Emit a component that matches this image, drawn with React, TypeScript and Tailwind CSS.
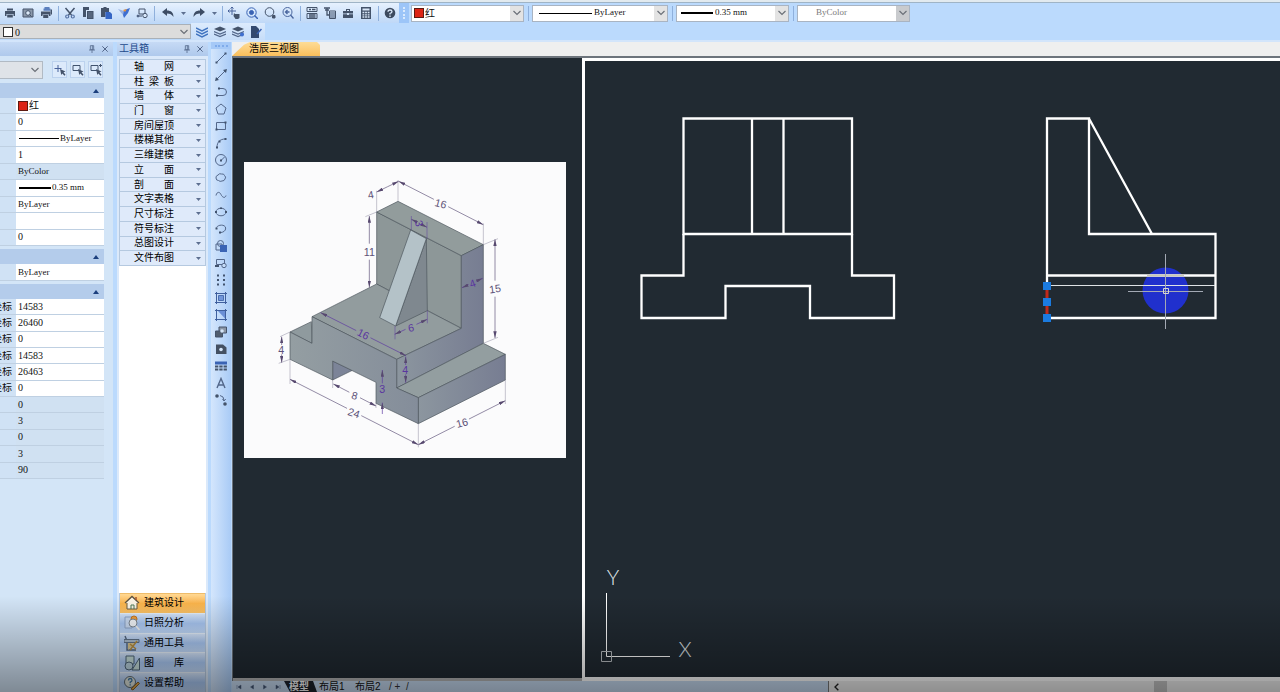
import type { ReactNode } from "react";
import clsx from "clsx";

type GlyphProps = { children: ReactNode; className?: string };

const Glyph = ({ children, className = "size-3" }: GlyphProps) => (
  <svg
    viewBox="0 0 12 12"
    className={clsx("shrink-0", className)}
    fill="none"
    stroke="#53678a"
    strokeWidth="1"
    aria-hidden="true"
  >
    {children}
  </svg>
);

const DARK = "#44536a";
const BLUE = "#3a63b4";

const fileIcons = [
  {
    name: "Print",
    icon: (
      <g fill={DARK} stroke="none">
        <path d="M3 1.5h6v2H3zM1 4h10v5H9.5V7h-7v2H1z" />
        <path d="M3.2 7.6h5.6V10.500H3.200z" />
      </g>
    ),
  },
  {
    name: "Print preview",
    icon: (
      <>
        <path d="M1 2h10v8H1z" fill="#8b98aa" stroke={DARK} />
        <circle cx="6" cy="6" r="2.300" fill="#dce9f8" stroke={DARK} />
        <path d="M7.600 7.600l2 2" stroke={DARK} />
      </>
    ),
  },
  {
    name: "Batch print",
    icon: (
      <g fill={DARK} stroke="none">
        <path d="M4.500 0h5v1.500h1v2.300H3.500V1.500h1z" fill="#5b7fbe" />
        <path d="M1 4.500h9.500V9H9V7.500H2.500V9H1zM3.200 8H8.300v3H3.200z" />
        <path d="M10.500 2.500h1.500v5h-1.200z" />
      </g>
    ),
  },
];

const editIcons = [
  {
    name: "Cut",
    icon: (
      <g stroke={DARK} strokeWidth="1.500">
        <path d="M1.500 1l6 7M10.500 1l-6 7" />
        <circle cx="3.200" cy="9.500" r="1.500" stroke="#5672a4" strokeWidth="1.200" />
        <circle cx="8.800" cy="9.500" r="1.500" stroke="#5672a4" strokeWidth="1.200" />
      </g>
    ),
  },
  {
    name: "Copy",
    icon: (
      <g fill={DARK} stroke="none">
        <path d="M1 0h6v3H4v7H1z" />
        <path d="M5 4h6.500v8H5z" />
        <path d="M6 6h4.500M6 8h4.500M6 10h4.500" stroke="#8796ad" strokeWidth=".6" />
      </g>
    ),
  },
  {
    name: "Paste",
    icon: (
      <g stroke="none">
        <path d="M1 1h2.500V0h3v1H9v4H5.500v5H1z" fill={DARK} />
        <path d="M5.500 5h4.500l2 2v5H5.500z" fill="#3565c4" />
      </g>
    ),
  },
  {
    name: "Match properties",
    icon: (
      <g stroke="none">
        <path d="M0 2l6 2-1 4z" fill="#9db3e2" />
        <path d="M6 3l6-2-2 5-4 5-1-3z" fill="#3f6fd0" />
        <path d="M5 3l4-1-2 3z" fill="#ef9a3c" />
      </g>
    ),
  },
  {
    name: "Block editor",
    icon: (
      <>
        <path d="M3 2h6v5H3zM1 9h5" stroke={DARK} />
        <circle cx="2" cy="9" r="1" fill={DARK} />
        <circle cx="9" cy="8.500" r="2.200" fill="#d8e8fb" stroke={DARK} />
      </>
    ),
  },
];

const viewIcons = [
  {
    name: "Pan",
    icon: (
      <>
        <path d="M4 0v8M0 4h8M2.500 1.500L4 0l1.500 1.500M1.500 2.500L0 4l1.500 1.500" stroke="#48629a" />
        <path d="M6 6l1 1h4.500v4L10 12H7.500L5.500 9z" fill={DARK} stroke="none" />
      </>
    ),
  },
  {
    name: "Zoom realtime",
    icon: (
      <g stroke={BLUE}>
        <circle cx="5.500" cy="5.500" r="4.700" />
        <circle cx="5.500" cy="5.500" r="2" fill={BLUE} />
        <path d="M8.500 8.500L12 12" strokeWidth="1.500" />
      </g>
    ),
  },
  {
    name: "Zoom window",
    icon: (
      <g stroke={DARK}>
        <circle cx="5.500" cy="5" r="4.300" />
        <path d="M8.500 8.500h2.500v2.500H8.500z" fill={DARK} />
      </g>
    ),
  },
  {
    name: "Zoom previous",
    icon: (
      <g stroke="#4a669e">
        <circle cx="5.500" cy="5" r="4.500" />
        <path d="M3.500 5h4M5.500 3L3.500 5l2 2M8.500 8l3 3.500" strokeWidth="1.300" />
      </g>
    ),
  },
];

const paletteIcons = [
  {
    name: "Properties",
    icon: (
      <g stroke={DARK}>
        <path d="M1 .5h10v4H1zM1 6.500h10v5H1z" />
        <path d="M3 2.500h2M6 2.500h3.500M3 8h6.500M3 10h6.500" strokeWidth="1.400" />
      </g>
    ),
  },
  {
    name: "Design center",
    icon: (
      <g stroke={DARK}>
        <path d="M0 1h6M1 3h4M3 1v7h2" strokeWidth="1.300" />
        <path d="M5.500 4h6v7.500h-6zM6 6h5M6 8h5M6 10h5" />
      </g>
    ),
  },
  {
    name: "Tool palettes",
    icon: (
      <g fill={DARK} stroke="none">
        <path d="M1 4h10v2.500H1zM1 7.200h10V11H1zM4 2h4v2H7V3H5v1H4z" />
        <path d="M5 6h2v2H5z" fill="#cfe2f8" />
      </g>
    ),
  },
  {
    name: "Calculator",
    icon: (
      <>
        <path d="M1 0h10v12H1z" fill={DARK} stroke="none" />
        <path d="M2.500 5.500h7M2.500 7.800h7M2.500 10h7" stroke="#d8e6f7" strokeWidth="1.300" strokeDasharray="1.800 .8" />
        <path d="M2.500 2.500h7" stroke="#d8e6f7" strokeWidth="2" />
      </>
    ),
  },
];

const layerIcon = (extra: ReactNode) => (
  <>
    <path d="M0 3l6-2.500L12 3 6 5.500z" fill={DARK} stroke="none" />
    <path d="M0 5.500L6 8l6-2.500M0 8l6 2.500L12 8" strokeWidth="1.300" />
    {extra}
  </>
);

const layerIcons = [
  {
    name: "Layer manager",
    icon: (
      <g stroke="#4174c0" strokeWidth="1.400">
        <path d="M0 2l6 3 6-3M0 5l6 3 6-3M0 8l6 3 6-3" />
      </g>
    ),
  },
  { name: "Layer previous", icon: layerIcon(null) },
  {
    name: "Layer states",
    icon: layerIcon(<circle cx="10" cy="8.500" r="2" fill="#3f6fd0" stroke="none" />),
  },
  {
    name: "Layer walk",
    icon: (
      <>
        <path d="M1 0h5l3 3v9H1z" fill="#33496f" stroke="none" />
        <path d="M7 8l4.500-5" stroke={BLUE} strokeWidth="1.500" />
      </>
    ),
  },
];

const drawIcons = [
  {
    name: "Line",
    icon: (
      <>
        <path d="M1.500 10.500l9-9" />
        <path d="M.5 9.500h2v2h-2zM9.500.5h2v2h-2z" fill="#41536e" stroke="none" />
      </>
    ),
  },
  {
    name: "Construction line",
    icon: (
      <>
        <path d="M2 10l8-8" />
        <path d="M0 12l1-4 3 3zM12 0L8 1l3 3z" fill="#41536e" stroke="none" />
      </>
    ),
  },
  {
    name: "Polyline",
    icon: (
      <>
        <path d="M4 2.500h4a3.500 3.500 0 0 1 0 7H2" />
        <path d="M3 1.500h2v2H3zM1 8.500h2v2H1z" fill="#41536e" stroke="none" />
      </>
    ),
  },
  { name: "Polygon", icon: <path d="M6 1l5 4-2 6H3L1 5z" /> },
  {
    name: "Rectangle",
    icon: (
      <>
        <path d="M1.500 2.500h9v7h-9z" />
        <path d="M.5 8.500h2v2h-2zM9.500 1.500h2v2h-2z" fill="#41536e" stroke="none" />
      </>
    ),
  },
  {
    name: "Arc",
    icon: (
      <>
        <path d="M2 10.500C2 5 5 2 10.500 2" />
        <path d="M1 9.500h2v2H1zM9.500 1h2v2h-2zM3.500 3.500h2v2h-2z" fill="#41536e" stroke="none" />
      </>
    ),
  },
  {
    name: "Circle",
    icon: (
      <>
        <circle cx="6" cy="6" r="5.500" />
        <path d="M6 6.500l3.500-3.500" />
        <path d="M5 5.500h2v2H5z" fill="#41536e" stroke="none" />
      </>
    ),
  },
  {
    name: "Revision cloud",
    icon: <path d="M3 3q1.500-2 3.500-1 2.500-.5 3 1.500 2 1.500.5 3.500-.5 2-3 2-2 1-3.500-.5-2.500 0-2.500-2.500Q.5 4 3 3z" />,
  },
  { name: "Spline", icon: <path d="M1 6.500C2 2 5 3 6 5.500s4 4.500 5 1" /> },
  {
    name: "Ellipse",
    icon: (
      <>
        <ellipse cx="6" cy="6" rx="5" ry="3.800" />
        <path d="M0 5h2v2H0zM10 5h2v2h-2zM5 1.500h2v1.500H5z" fill="#41536e" stroke="none" />
      </>
    ),
  },
  {
    name: "Elliptical arc",
    icon: (
      <>
        <path d="M1.500 4.500C3 1.500 10 1 10.700 5c.3 3-3 4.500-5 4.500" />
        <path d="M.5 4.500h2v2h-2zM4 8.500h2v2H4z" fill="#41536e" stroke="none" />
      </>
    ),
  },
  {
    name: "Insert block",
    icon: (
      <>
        <path d="M1 4h6v6H1z" />
        <circle cx="5.500" cy="3.500" r="3" />
        <path d="M5 5H12v7H5z" fill={BLUE} stroke="none" />
      </>
    ),
  },
  {
    name: "Make block",
    icon: (
      <>
        <path d="M1.500 2.500h8v5h-8z" />
        <path d="M0 8h4v2H0z" fill="#41536e" stroke="none" />
        <circle cx="9" cy="8.500" r="2.200" fill="#c5dcf8" />
      </>
    ),
  },
  {
    name: "Point",
    icon: (
      <path
        d="M2 .5h2v2H2zM8 .5h2v2H8zM2 5h2v2H2zM8 5h2v2H8zM2 9.500h2v2H2zM8 9.500h2v2H8z"
        fill="#41536e"
        stroke="none"
      />
    ),
  },
  {
    name: "Hatch",
    icon: (
      <>
        <path d="M3.500 3.500h5v5h-5z" fill="#7196da" stroke="#4c6fb0" />
        <path d="M0 1.500h12M0 10.500h12M1.500 0v12M10.500 0v12" stroke="#3f5f9d" />
      </>
    ),
  },
  {
    name: "Gradient",
    icon: (
      <>
        <path d="M3 2h7.500v8z" fill="#6a8fd6" stroke="none" />
        <path d="M0 1.500h12M0 10.500h12M1.500 0v12M10.500 0v12" stroke="#3f5f9d" />
      </>
    ),
  },
  {
    name: "Region",
    icon: (
      <>
        <path d="M4 1h7.500v6H4z" fill="#8b96a5" stroke={DARK} />
        <path d="M.5 5h7v6h-7z" fill="#515d6e" stroke={DARK} />
        <circle cx="7" cy="5" r="1.800" fill="#d5e5f8" stroke="none" />
      </>
    ),
  },
  {
    name: "Wipeout",
    icon: (
      <>
        <path d="M1 1.500h7l3.500 3v6.500H1z" fill="#445062" stroke="none" />
        <circle cx="6" cy="6.500" r="1.800" fill="#d5e5f8" stroke="none" />
      </>
    ),
  },
  {
    name: "Table",
    icon: (
      <>
        <path d="M0 1.500h12v3H0z" fill={BLUE} stroke="none" />
        <path d="M0 6.500h12M0 9.500h12" strokeWidth="2" strokeDasharray="3.300 1" stroke={DARK} />
      </>
    ),
  },
  {
    name: "Multiline text",
    icon: <path d="M2 11L6 1.500 10 11M3.500 8h5" strokeWidth="1.400" />,
  },
  {
    name: "Add selected",
    icon: (
      <>
        <path d="M5 1.500q4 .5 4 5M7.500 5L9 7l1.700-2" />
        <circle cx="2" cy="2" r="1.800" fill={DARK} stroke="none" />
        <circle cx="10" cy="10" r="1.800" fill={DARK} stroke="none" />
      </>
    ),
  },
];

const selectIcons = [
  {
    name: "Toggle pickadd",
    icon: <path d="M4 1v7M.5 4.500h7" stroke="#48629a" />,
  },
  { name: "Select objects", icon: <path d="M1 1.500h7v5H1z" stroke="#41536e" /> },
  {
    name: "Quick select",
    icon: <path d="M1 1.500h7v5H1zM10.500 0v3M9 1.500h3" stroke="#41536e" />,
  },
];

const toolboxItems = [
  "轴\u3000\u3000网",
  "柱\u2002梁\u2002板",
  "墙\u3000\u3000体",
  "门\u3000\u3000窗",
  "房间屋顶",
  "楼梯其他",
  "三维建模",
  "立\u3000\u3000面",
  "剖\u3000\u3000面",
  "文字表格",
  "尺寸标注",
  "符号标注",
  "总图设计",
  "文件布图",
];

const toolboxGroups = [
  {
    label: "建筑设计",
    icon: (
      <>
        <path d="M3 7v7h10V7" fill="#fdf6e6" stroke="#6b5d40" />
        <path d="M1 8l7-6.500L15 8" fill="#fdf6e6" stroke="#5c5240" strokeWidth="1.300" />
        <path d="M7 14v-4h3v4" stroke="#4d7a56" />
        <path d="M12 2v3" stroke="#a6552c" strokeWidth="1.500" />
      </>
    ),
  },
  {
    label: "日照分析",
    icon: (
      <>
        <path d="M1 2h7v11H1z" fill="#c9daf2" stroke="#8ea5c8" />
        <circle cx="10" cy="4" r="3" fill="#f0a040" stroke="#c47722" />
        <circle cx="9" cy="8" r="4" fill="#f3f6fa" stroke="#7d8894" />
        <path d="M12 11l3.500 4" stroke="#f0f2f4" strokeWidth="1.800" />
      </>
    ),
  },
  {
    label: "通用工具",
    icon: (
      <>
        <path d="M1 1l2 5v9h9" stroke="#53657f" strokeWidth="1.400" />
        <path d="M0 4.500h15v3H0z" fill="#a9bbce" stroke="#5f7188" />
        <path d="M4 15V8h7z" fill="#d8c48e" />
        <path d="M6 15l7-9M6 9l6 5" stroke="#b58c3d" strokeWidth="1.500" />
      </>
    ),
  },
  {
    label: "图\u3000\u3000库",
    icon: (
      <g stroke="#4d6478">
        <path d="M2 1h8v8H2z" fill="#c4dcd9" />
        <circle cx="5" cy="11" r="4" fill="#b8d1dd" />
        <path d="M15.500 3v12H8z" fill="#c4dcd9" />
      </g>
    ),
  },
  {
    label: "设置帮助",
    icon: (
      <>
        <circle cx="6" cy="7" r="5.500" fill="#e0e5dd" stroke="#5e6b74" />
        <path d="M4.500 5.500q0-2 1.700-2T8 5.300Q8 6.500 6.200 7.200v1M6.200 9.300v1.200" stroke="#3f77a5" strokeWidth="1.300" />
        <path d="M7 14l7-7 1.500 1.500L9 15z" fill="#d9a24a" stroke="#8a6426" />
      </>
    ),
  },
];

type Property = { label: string; value: string; line?: string; color?: boolean; readOnly?: boolean; small?: boolean };

const generalProperties: Property[] = [
  { label: "", value: "红", color: true },
  { label: "", value: "0" },
  { label: "", value: "ByLayer", line: "h-px w-10 bg-black", small: true },
  { label: "", value: "1" },
  { label: "", value: "ByColor", readOnly: true, small: true },
  { label: "", value: "0.35 mm", line: "h-[2px] w-8 bg-black", small: true },
  { label: "", value: "ByLayer", small: true },
  { label: "", value: "\u00a0" },
  { label: "", value: "0" },
];

const materialProperties: Property[] = [{ label: "", value: "ByLayer", small: true }];

const geometryProperties: Property[] = [
  { label: "坐标", value: "14583" },
  { label: "坐标", value: "26460" },
  { label: "坐标", value: "0" },
  { label: "坐标", value: "14583" },
  { label: "坐标", value: "26463" },
  { label: "坐标", value: "0" },
  { label: "", value: "0", readOnly: true },
  { label: "", value: "3", readOnly: true },
  { label: "", value: "0", readOnly: true },
  { label: "", value: "3", readOnly: true },
  { label: "", value: "90", readOnly: true },
];

const Chevron = () => (
  <svg viewBox="0 0 8 6" className="h-[6px] w-2" fill="none" stroke="#6b7078" strokeWidth="1.200" aria-hidden="true">
    <path d="M.5 1L4 4.500 7.500 1" />
  </svg>
);

const Caret = () => (
  <svg viewBox="0 0 5 3" className="h-[3px] w-[5px]" fill="#5d6f90" aria-hidden="true">
    <path d="M0 0h5L2.500 3z" />
  </svg>
);

const Separator = () => (
  <span className="flex w-[6px] shrink-0 justify-center">
    <span className="h-[15px] w-px bg-[#8fb0dc]" />
  </span>
);

const ToolButtons = ({ items }: { items: { name: string; icon: ReactNode }[] }) => (
  <>
    {items.map(({ name, icon }) => (
      <button key={name} type="button" aria-label={name} className="flex h-full w-[18px] shrink-0 items-center justify-center">
        <Glyph>{icon}</Glyph>
      </button>
    ))}
  </>
);

type ComboProps = {
  label: string;
  value: string;
  className: string;
  textClass?: string;
  children?: ReactNode;
  disabled?: boolean;
};

const Combo = ({ label, value, className, textClass, children, disabled }: ComboProps) => (
  <div
    className={clsx(
      "relative flex h-[17px] shrink-0 items-center border border-[#a9b4c2] bg-white pl-[2px]",
      className
    )}
  >
    {children}
    <select
      aria-label={label}
      disabled={disabled}
      className={clsx("h-full min-w-0 flex-1 appearance-none bg-transparent outline-none", textClass)}
    >
      <option>{value}</option>
    </select>
    <span
      className={clsx(
        "pointer-events-none flex h-full w-[13px] items-center justify-center",
        disabled ? "bg-[#c9cbce]" : "bg-[#e3e3e3]"
      )}
    >
      <Chevron />
    </span>
  </div>
);

const Swatch = () => <span className="mr-px size-[10px] shrink-0 border border-[#5c1a12] bg-[#dd2415]" />;

const StandardToolbar = () => (
  <div className="flex h-5 items-center">
    <div className="flex h-full items-center bg-linear-to-b from-[#e6f1fe] to-[#bfd8f7] pl-px">
      <ToolButtons items={fileIcons} />
      <Separator />
      <ToolButtons items={editIcons} />
      <Separator />
      <button type="button" aria-label="Undo" className="flex w-[22px] justify-center">
        <Glyph>
          <path d="M0 5l5-4v2.500c4 0 6.500 2 6.500 6.500C10 7.500 8 6.500 5 6.500V9z" fill="#3d4c64" stroke="none" />
        </Glyph>
      </button>
      <button type="button" aria-label="Undo history" className="flex w-[9px] justify-center">
        <Caret />
      </button>
      <button type="button" aria-label="Redo" className="flex w-[22px] justify-center">
        <Glyph>
          <path d="M12 5L7 1v2.500C3 3.500.5 5.500.5 10 2 7.500 4 6.500 7 6.500V9z" fill="#3d4c64" stroke="none" />
        </Glyph>
      </button>
      <button type="button" aria-label="Redo history" className="flex w-[9px] justify-center">
        <Caret />
      </button>
      <Separator />
      <ToolButtons items={viewIcons} />
      <Separator />
      <ToolButtons items={paletteIcons} />
      <Separator />
      <button type="button" aria-label="Help" className="flex w-[18px] justify-center">
        <Glyph>
          <circle cx="6" cy="6" r="5.300" fill="#3d4a5e" stroke="none" />
          <path d="M4 4.700q0-1.700 2-1.700t2 1.500Q8 5.700 6 6.500v1M6 8.500V10" stroke="#dbe8f8" strokeWidth="1.300" />
        </Glyph>
      </button>
      <span className="flex h-full w-[10px] items-center justify-center bg-[#9cc5f8]">
        <span className="h-3 border-l-2 border-dotted border-[#d9eafd]" />
      </span>
    </div>
    <div className="flex h-full items-center gap-px pl-[2px]">
      <Combo label="Color" value="红" className="w-[113px]" textClass="text-[10px]">
        <Swatch />
      </Combo>
      <Separator />
      <Combo label="Linetype" value="ByLayer" className="w-[136px]" textClass="font-['Liberation_Serif',serif] text-[9px]">
        <span className="mr-[2px] ml-1 h-px w-[53px] bg-black" />
      </Combo>
      <Separator />
      <Combo label="Lineweight" value="0.35 mm" className="w-[113px]" textClass="font-['Liberation_Serif',serif] text-[9px]">
        <span className="mx-[2px] h-[2px] w-8 bg-black" />
      </Combo>
      <Separator />
      <Combo
        label="Plot style"
        value="ByColor"
        disabled
        className="w-[113px]"
        textClass="pl-4 font-['Liberation_Serif',serif] text-[9px] text-[#7c7c7c]"
      />
    </div>
  </div>
);

const LayerToolbar = () => (
  <div className="flex h-[17px] items-center">
    <div className="flex h-[15px] w-[191px] items-center border-y border-r border-[#a9b0b8] bg-[#dcdcdc] pl-[3px]">
      <span className="mr-[2px] size-[10px] shrink-0 border border-[#333] bg-white" />
      <select
        aria-label="Layer"
        className="h-full min-w-0 flex-1 appearance-none bg-transparent font-['Liberation_Serif',serif] text-[10px] outline-none"
      >
        <option>0</option>
      </select>
      <span className="pointer-events-none flex w-3 justify-center">
        <Chevron />
      </span>
    </div>
    <div className="flex h-full bg-linear-to-b from-[#dcebfd] to-[#c6ddf9] pl-[2px]">
      <ToolButtons items={layerIcons} />
    </div>
  </div>
);

const PanelHeader = ({ title }: { title?: string }) => (
  <div className="flex h-[14px] items-center bg-linear-to-b from-[#c6daf5] to-[#afc9ec] px-[2px]">
    <h2 className="flex-1 text-[10px] leading-none text-[#234a8c]">{title}</h2>
    <button type="button" aria-label="Pin panel" className="flex w-[13px] justify-center">
      <Glyph className="size-2">
        <path d="M3.500 1h5v6h-5zM6.500 1v6M1.500 7.500h9M6 8v4" strokeWidth="1.200" />
      </Glyph>
    </button>
    <button type="button" aria-label="Close panel" className="flex w-[13px] justify-center">
      <Glyph className="size-2">
        <path d="M2 2l8 8M10 2l-8 8" strokeWidth="1.500" />
      </Glyph>
    </button>
  </div>
);

const SectionHeader = ({ name }: { name: string }) => (
  <button
    type="button"
    aria-label={name}
    className="flex h-[15px] w-full items-center justify-end bg-[#b4cceb] pr-[5px]"
  >
    <svg viewBox="0 0 6 4" className="h-1 w-[6px]" fill="#1c3f7d" aria-hidden="true">
      <path d="M0 4h6L3 0z" />
    </svg>
  </button>
);

const PropertyTable = ({ rows, className }: { rows: Property[]; className: string }) => (
  <table className={clsx("w-full table-fixed border-collapse", className)}>
    <tbody>
      {rows.map((row, index) => (
        <tr key={index} className="border-b border-[#bfd0e2]">
          <th scope="row" className="w-4 bg-[#d0e2f5] p-0 font-normal">
            <span className="flex justify-end overflow-hidden pr-1 text-[10px] leading-none whitespace-nowrap">
              {row.label}
            </span>
          </th>
          <td className={clsx("p-0 pl-[2px]", row.readOnly ? "bg-[#d0e1f2]" : "bg-white")}>
            <span
              className={clsx(
                "flex h-[10px] items-center font-['Liberation_Serif','Noto_Sans_CJK_SC',serif] leading-none",
                row.small ? "text-[9px]" : "text-[10px]"
              )}
            >
              {row.color && <Swatch />}
              {row.line && <span className={clsx("mx-px shrink-0", row.line)} />}
              {row.value}
            </span>
          </td>
        </tr>
      ))}
    </tbody>
  </table>
);

const PropertiesPanel = () => (
  <aside className="w-[113px] shrink-0 bg-[#d3e5f7]">
    <PanelHeader />
    <div className="flex h-[27px] items-center pr-[10px]">
      <div className="flex h-[18px] flex-1 items-center border-y border-r border-[#b1bac4] bg-[#dfe3e8]">
        <select aria-label="Selection" className="h-full min-w-0 flex-1 appearance-none bg-transparent" />
        <span className="pointer-events-none flex w-[14px] justify-center">
          <Chevron />
        </span>
      </div>
      <div className="ml-[9px] flex gap-[3px]">
        {selectIcons.map(({ name, icon }) => (
          <button
            key={name}
            type="button"
            aria-label={name}
            className="flex h-[17px] w-[15px] items-center justify-center border border-[#bcd2ee] bg-[#dceafb]"
          >
            <Glyph>
              {icon}
              <path d="M6 5l5.500 2.500-2 .8 2 2.500-1 1-2.200-2.300L7.300 11z" fill={DARK} stroke="none" />
            </Glyph>
          </button>
        ))}
      </div>
    </div>
    <div className="flex flex-col gap-[3px] pr-[9px]">
      <section>
        <SectionHeader name="General" />
        <PropertyTable rows={generalProperties} className="h-[148px]" />
      </section>
      <section>
        <SectionHeader name="3D visualization" />
        <PropertyTable rows={materialProperties} className="h-[17px]" />
      </section>
      <section>
        <SectionHeader name="Geometry" />
        <PropertyTable rows={geometryProperties} className="h-[180px]" />
      </section>
    </div>
  </aside>
);

const ToolboxPanel = () => (
  <aside className="ml-1 flex w-[91px] shrink-0 flex-col bg-[#dbe9fa]">
    <PanelHeader title="工具箱" />
    <div className="mx-[2px] mt-[3px] flex min-h-0 flex-1 flex-col bg-white">
      <ul className="grid h-[207px] auto-rows-fr border-x border-t border-[#b5c9e0]">
        {toolboxItems.map((item) => (
          <li key={item} className="min-h-0 border-b border-[#b5c9e0] bg-[#dfeafa]">
            <button type="button" className="flex h-full w-full items-center justify-between pr-1 pl-[14px]">
              <span className="text-[10px] leading-none whitespace-pre text-black">{item}</span>
              <Caret />
            </button>
          </li>
        ))}
      </ul>
      <div className="mt-auto grid h-[99px] auto-rows-fr border-x border-[#b5c9e0]">
        {toolboxGroups.map(({ label, icon }, index) => (
          <button
            key={label}
            type="button"
            className={clsx(
              "flex min-h-0 items-center gap-1 border-t pl-1",
              index === 0
                ? "border-[#eebc6a] bg-linear-to-b from-[#ffd893] via-[#fdb64c] to-[#fbc266]"
                : "border-[#e6f0fc] bg-linear-to-b from-[#d5e5fb] via-[#a9c8f4] to-[#c0d8f8]"
            )}
          >
            <svg viewBox="0 0 16 16" className="size-4 shrink-0" fill="none" aria-hidden="true">
              {icon}
            </svg>
            <span className="text-[10px] leading-none whitespace-pre text-black">{label}</span>
          </button>
        ))}
      </div>
    </div>
  </aside>
);

const DrawToolbar = () => (
  <nav aria-label="Draw" className="mr-px ml-[3px] w-5 shrink-0 bg-linear-to-r from-[#d4e6fc] to-[#a9cbf6]">
    <div className="flex h-[7px] items-center justify-center bg-[#a6c9f7]">
      <span className="w-[13px] border-t-2 border-dotted border-[#7fabea]" />
    </div>
    <div className="grid h-[360px] auto-rows-fr">
      {drawIcons.map(({ name, icon }) => (
        <button key={name} type="button" aria-label={name} className="flex min-h-0 items-center justify-center">
          <Glyph>{icon}</Glyph>
        </button>
      ))}
    </div>
  </nav>
);

type DimensionProps = {
  from: [number, number];
  to: [number, number];
  label: string;
  at: [number, number];
  angle?: number;
  gap?: number;
  color?: string;
};

// A dimension line that is broken in the middle for its label
const Dimension = ({ from, to, label, at, angle = 0, gap = 24, color = "#5d5278" }: DimensionProps) => {
  const length = Math.hypot(to[0] - from[0], to[1] - from[1]);
  const ux = (to[0] - from[0]) / length;
  const uy = (to[1] - from[1]) / length;
  const mid = [(from[0] + to[0]) / 2, (from[1] + to[1]) / 2];
  return (
    <g stroke={color} strokeWidth="2">
      <line x1={mid[0] - ux * gap} y1={mid[1] - uy * gap} x2={from[0]} y2={from[1]} markerEnd="url(#arrow)" />
      <line x1={mid[0] + ux * gap} y1={mid[1] + uy * gap} x2={to[0]} y2={to[1]} markerEnd="url(#arrow)" />
      <text
        x={at[0]}
        y={at[1]}
        transform={`rotate(${angle} ${at[0]} ${at[1]})`}
        textAnchor="middle"
        dominantBaseline="central"
        fontSize="32"
        fill={color}
        stroke="none"
        fontFamily="Liberation Sans, sans-serif"
      >
        {label}
      </text>
    </g>
  );
};

const IsometricFigure = () => (
  <svg viewBox="0 6 966 888" className="w-[322px] bg-[#fbfbfc]" role="img" aria-label="Isometric view">
    <defs>
      <marker id="arrow" viewBox="0 0 20 10" refX="20" refY="5" markerWidth="20" markerHeight="10" markerUnits="userSpaceOnUse" orient="auto">
        <path d="M0 0l20 5-20 5z" fill="#57496f" />
      </marker>
      <linearGradient id="front" x1="0" y1="0" x2="1" y2="0">
        <stop offset="0" stopColor="#949ea2" />
        <stop offset="1" stopColor="#848d9a" />
      </linearGradient>
      <linearGradient id="side" x1="0" y1="0" x2="1" y2="0">
        <stop offset="0" stopColor="#8c969f" />
        <stop offset="1" stopColor="#777d92" />
      </linearGradient>
    </defs>
    <g stroke="#4c555c" strokeWidth="2" strokeLinejoin="round">
      <path d="M398 156L652 287V505L398 372z" fill="#8d9798" />
      <path d="M398 156L462 124 718 254 652 287z" fill="#929c9c" />
      <path d="M138 516L202 485 204 550z" fill="#8f9a9e" />
      <path d="M204 470L398 372 435 392 550 452 652 505 458 598z" fill="#929c9e" />
      <path d="M652 287L718 254V550L458 684V598L652 505z" fill="url(#side)" />
      <path d="M458 684L718 550 784 583 523 713z" fill="#939ea0" />
      <path d="M523 713L784 583V660L523 791z" fill="url(#side)" />
      <path d="M266 603L325 631 266 660z" fill="#7c8498" />
      <path
        d="M138 516L204 550V470L458 598V684L523 713V791L396 730V667L266 603V660L138 598z"
        fill="url(#front)"
      />
      <path d="M547 236L550 452 455 498z" fill="#7f888f" />
      <path d="M500 210L547 236 455 498 407 473z" fill="#b4c2c8" />
    </g>
    <g stroke="#8d8aa0" strokeWidth="1.500">
      <path d="M398 156V92M462 124V60M718 254V190M398 156L364 170M718 254L762 236M718 550L762 532" />
      <path d="M138 516L108 530M138 598L104 610M138 598V672M523 791V862M784 660V732M266 660V684M396 727V744" />
      <path d="M502 210V168M549 236V186M453 498V538M550 452V490" stroke="#5b3c9c" />
    </g>
    <Dimension from={[398, 96]} to={[464, 64]} label="4" at={[380, 104]} angle={-10} gap={0} />
    <Dimension from={[464, 64]} to={[718, 194]} label="16" at={[590, 130]} angle={15} />
    <Dimension from={[376, 168]} to={[376, 382]} label="11" at={[376, 276]} />
    <Dimension from={[753, 238]} to={[753, 534]} label="15" at={[753, 386]} angle={-8} />
    <Dimension from={[138, 658]} to={[523, 854]} label="24" at={[330, 758]} angle={18} />
    <Dimension from={[523, 854]} to={[784, 722]} label="16" at={[654, 788]} angle={-15} />
    <Dimension from={[268, 672]} to={[396, 738]} label="8" at={[332, 706]} angle={15} gap={18} />
    <Dimension from={[113, 530]} to={[113, 608]} label="4" at={[112, 570]} gap={14} />
    <Dimension from={[230, 458]} to={[486, 587]} label="16" at={[358, 522]} angle={27} color="#5a35a0" />
    <Dimension from={[485, 590]} to={[485, 668]} label="4" at={[484, 630]} gap={14} color="#5a35a0" />
    <Dimension from={[452, 523]} to={[550, 478]} label="6" at={[501, 503]} angle={-10} gap={18} color="#5a35a0" />
    <Dimension from={[654, 383]} to={[716, 355]} label="4" at={[685, 370]} angle={-20} gap={12} color="#5a35a0" />
    <Dimension from={[502, 178]} to={[549, 202]} label="3" at={[526, 190]} angle={75} gap={10} color="#5a35a0" />
    <g stroke="#5a35a0" strokeWidth="2">
      <path d="M415 670V630" markerEnd="url(#arrow)" />
      <path d="M415 762V728" markerEnd="url(#arrow)" />
    </g>
    <text x="415" y="698" textAnchor="middle" fontSize="32" fill="#5a35a0" fontFamily="Liberation Sans, sans-serif">
      3
    </text>
  </svg>
);

const ModelViewport = () => (
  <div className="relative min-w-0 flex-1 overflow-hidden border-t-[3px] border-b-4 border-l-[3px] border-white bg-[#212a32]">
    <svg className="absolute inset-0 h-full w-full" fill="none" role="img" aria-label="Front and side views">
      <g transform="translate(-585 -61)" stroke="#fff">
        <circle cx="1165.500" cy="290.500" r="23" fill="#2030cd" stroke="none" />
        <g strokeWidth="2.300">
          <path d="M683.500 118.500H852V234H683.500zM752 118.500V234M783.500 118.500V234" />
          <path d="M683.500 234V275.500H641.500V318H725.500V286H810V318H894V275.500H852V234" />
          <path d="M1047 286V118.500H1089V234H1215.500V318H1047M1089 118.500L1152 234M1047 275.500H1215" />
        </g>
        <path d="M1147 275.500H1184" stroke="#c9c8b4" strokeWidth="2" />
        <path d="M1047 285.500H1215" stroke="#dfe3e6" />
        <path d="M1047 286V318" stroke="#c02a1c" strokeWidth="3" />
        <path d="M1043 282h8v8h-8zM1043 298h8v8h-8zM1043 314h8v8h-8z" fill="#1b7be0" stroke="none" />
        <path d="M1128 291.500H1203M1165.500 254V329" stroke="#a3a9b4" />
        <path d="M1163.500 288.500h5v5h-5z" stroke="#d8d8d0" />
      </g>
    </svg>
    <svg className="absolute bottom-0 left-3 h-28 w-28" fill="none" role="img" aria-label="UCS icon">
      <g stroke="#fff">
        <path d="M9.500 28v63.500H73" />
        <path d="M4.500 86.500h10v10h-10z" stroke="#b8bdc1" />
      </g>
      <g fill="#dfe3e6" fontSize="21" fontFamily="Lato, sans-serif" fontWeight="300" textAnchor="middle">
        <text x="16" y="20">
          Y
        </text>
        <text x="88" y="92">
          X
        </text>
      </g>
    </svg>
  </div>
);

const LayoutTabs = () => (
  <div className="flex h-[11px] shrink-0 overflow-hidden text-[10px] leading-[11px]">
    <div className="flex w-[596px] items-center bg-[#c8dcf3]">
      {["M2 2v8M10 2v8L4 6z", "M9 2v8L3 6z", "M3 2v8l6-4z", "M10 2v8M2 2v8l6-4z"].map((path, index) => (
        <button
          key={path}
          type="button"
          aria-label={["First layout", "Previous layout", "Next layout", "Last layout"][index]}
          className="flex w-[13px] justify-center"
        >
          <Glyph className="size-[6px]">
            <path d={path} fill="#41536e" />
          </Glyph>
        </button>
      ))}
      <button
        type="button"
        className="bg-[#1d222b] pr-2 pl-[5px] font-bold text-white [clip-path:polygon(0_0,calc(100%-4px)_0,100%_100%,6px_100%)]"
      >
        模型
      </button>
      <button type="button" className="w-9 px-[2px] text-left text-[#111]">
        布局1
      </button>
      <button type="button" className="w-9 px-[2px] text-left text-[#111]">
        布局2
      </button>
      <button type="button" aria-label="Add layout" className="flex items-center text-[#333]">
        / +&nbsp;&nbsp;/
      </button>
    </div>
    <div className="relative flex flex-1 items-center border-l border-[#777] bg-[#efefef] pl-1">
      <button type="button" aria-label="Scroll left">
        <Glyph className="size-2">
          <path d="M8 1L3 6l5 5" strokeWidth="2" stroke="#222" />
        </Glyph>
      </button>
      <span className="absolute top-0 left-[72%] h-full w-[13px] bg-[#c3c3c3]" />
    </div>
  </div>
);

const DrawingWindow = () => (
  <main className="flex min-w-0 flex-1 flex-col bg-[#efefef]">
    <div className="flex h-[14px] shrink-0 items-end">
      <button
        type="button"
        className="h-full w-[88px] bg-linear-to-b from-[#fddc96] to-[#fbbf5a] pl-[17px] text-left text-[10px] leading-[14px] text-black [clip-path:polygon(0_100%,12px_20%,18px_0,calc(100%-3px)_0,100%_3px,100%_100%)]"
      >
        浩辰三视图
      </button>
    </div>
    <div className="flex min-h-0 flex-1 border-t-2 border-l border-[#6d747c]">
      <div className="w-[349px] shrink-0 border-b-[3px] border-[#b4b4b4] bg-[#212a32] pt-[104px] pl-[11px]">
        <IsometricFigure />
      </div>
      <ModelViewport />
    </div>
    <LayoutTabs />
  </main>
);

const App = () => {
  return (
    <div className="relative flex h-screen flex-col overflow-hidden bg-[#bbdafd] font-['Liberation_Sans','Noto_Sans_CJK_SC',sans-serif] text-[#111]">
      <div className="h-[3px] shrink-0 border-b border-[#9fb4c6] bg-[#e2eaef]" />
      <header className="shrink-0 border-b-2 border-[#d3e5fb]">
        <StandardToolbar />
        <LayerToolbar />
      </header>
      <div className="flex min-h-0 flex-1">
        <PropertiesPanel />
        <ToolboxPanel />
        <DrawToolbar />
        <DrawingWindow />
      </div>

      {/* BOTTOM SHADE */}
      <div className="pointer-events-none absolute inset-x-0 bottom-0 h-24 bg-linear-to-b from-transparent to-black/40" />
    </div>
  );
};

export default App;
